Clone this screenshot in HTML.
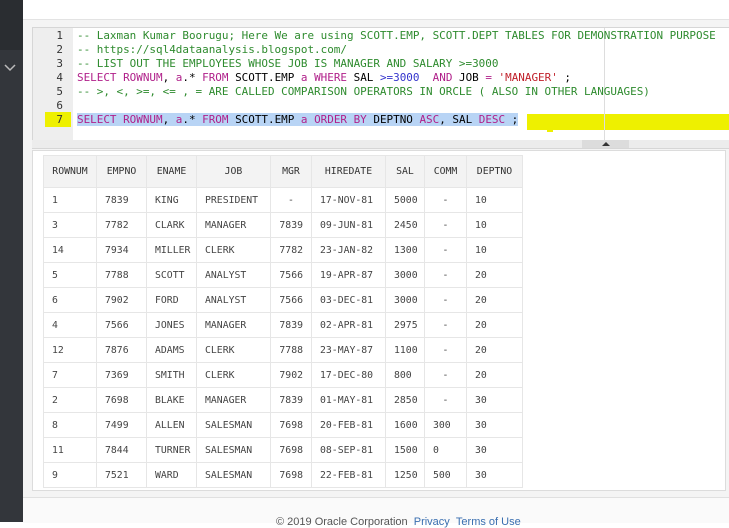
<!DOCTYPE html>
<html><head><meta charset="utf-8"><style>
body{margin:0;width:729px;height:522px;overflow:hidden;background:#fff;font-family:"Liberation Sans",sans-serif;position:relative}
.sb{position:absolute;left:0;top:0;width:23px;height:522px;background:#33363b}
.sb .t{position:absolute;left:0;top:0;width:23px;height:50px;background:#2a2d31}
.band{position:absolute;left:23px;top:19px;width:706px;height:478px;background:#f4f4f4;border-top:1px solid #e3e3e3}
.ed{position:absolute;left:32px;top:27px;width:697px;height:112px;background:#fff;border:1px solid #d6d6d6;border-right:none;overflow:hidden}
.gut{position:absolute;left:0;top:0;width:40px;height:112px;background:#eeeeee}
.code{position:absolute;left:0;top:0;font-family:"DejaVu Sans Mono",monospace;font-size:10.95px;line-height:14px;white-space:pre}
.ln{position:absolute;left:0;width:30px;text-align:right;color:#333}
.cl{position:absolute;left:44px}
.c{color:#2e8b2e}.k{color:#b0208a}.n{color:#3333cc}.s{color:#c0202a}
.sel{background:#b8d4f5}
.hs{position:absolute;left:32px;top:140px;width:697px;height:8px;background:#ececec;border-bottom:1px solid #d6d6d6}
.pan{position:absolute;left:32px;top:150px;width:692px;height:339px;background:#fff;border:1px solid #dcdcdc}
table{position:absolute;left:43px;top:155px;border-collapse:collapse;table-layout:fixed;width:479px;font-family:"DejaVu Sans Mono",monospace;font-size:9.8px;color:#444}
td,th{box-sizing:border-box;border:1px solid #e6e6e6;height:25px;padding:0 0 0 8px;text-align:left;font-weight:normal;white-space:nowrap;overflow:hidden}
th{height:32px;background:#f3f3f3;color:#333;text-align:center;padding:0}
td.r{text-align:right;padding:0 8px 0 0}
td.m{text-align:center;padding:0}
.foot{position:absolute;left:23px;top:497px;width:706px;height:25px;background:#fafafa;border-top:1px solid #e0e0e0;font-size:11px;color:#555}
</style></head><body>
<div class="sb"><div class="t"></div><svg style="position:absolute;left:4px;top:64px" width="12" height="8"><path d="M1 1 L6 6 L11 1" stroke="#bbb" stroke-width="1.5" fill="none"/></svg></div>
<div class="band"></div>
<div class="ed">
<div class="gut"></div>
<div style="position:absolute;left:12px;top:84px;width:26px;height:15px;background:#eef000"></div>
<div style="position:absolute;left:494px;top:86px;width:203px;height:16px;background:#eef000"></div>
<div style="position:absolute;left:514px;top:100px;width:6px;height:4px;background:#eef000"></div>
<div style="position:absolute;left:571px;top:0;width:1px;height:112px;background:#ddd"></div>
<div class="code" style="top:1px">
<div class="ln" style="top:0">1</div><div class="cl c" style="top:0">-- Laxman Kumar Boorugu; Here We are using SCOTT.EMP, SCOTT.DEPT TABLES FOR DEMONSTRATION PURPOSE</div>
<div class="ln" style="top:14px">2</div><div class="cl c" style="top:14px">-- https://sql4dataanalysis.blogspot.com/</div>
<div class="ln" style="top:28px">3</div><div class="cl c" style="top:28px">-- LIST OUT THE EMPLOYEES WHOSE JOB IS MANAGER AND SALARY &gt;=3000</div>
<div class="ln" style="top:42px">4</div><div class="cl" style="top:42px"><span class="k">SELECT ROWNUM</span>, <span class="k">a</span>.* <span class="k">FROM</span> SCOTT.EMP <span class="k">a WHERE</span> SAL <span class="n">&gt;=3000</span>  <span class="k">AND</span> JOB <span class="k">=</span> <span class="s">'MANAGER'</span> ;</div>
<div class="ln" style="top:56px">5</div><div class="cl c" style="top:56px">-- &gt;, &lt;, &gt;=, &lt;= , = ARE CALLED COMPARISON OPERATORS IN ORCLE ( ALSO IN OTHER LANGUAGES)</div>
<div class="ln" style="top:70px">6</div>
<div class="ln" style="top:84px">7</div><div class="cl" style="top:84px"><span class="sel"><span class="k">SELECT ROWNUM</span>, <span class="k">a</span>.* <span class="k">FROM</span> SCOTT.EMP <span class="k">a ORDER BY</span> DEPTNO <span class="k">ASC</span>, SAL <span class="k">DESC</span> ;</span></div>
</div></div>
<div class="hs"><div style="position:absolute;left:550px;top:0;width:47px;height:8px;background:#dcdcdc"></div><div style="position:absolute;left:570px;top:2px;width:0;height:0;border-left:4px solid transparent;border-right:4px solid transparent;border-bottom:4px solid #333"></div></div>
<div class="pan"></div>
<table>
<colgroup><col style="width:53px"><col style="width:50px"><col style="width:50px"><col style="width:74px"><col style="width:41px"><col style="width:74px"><col style="width:39px"><col style="width:42px"><col style="width:56px"></colgroup>
<tr><th>ROWNUM</th><th>EMPNO</th><th>ENAME</th><th>JOB</th><th>MGR</th><th>HIREDATE</th><th>SAL</th><th>COMM</th><th>DEPTNO</th></tr>
<tr><td>1</td><td>7839</td><td>KING</td><td>PRESIDENT</td><td class="m">-</td><td>17-NOV-81</td><td>5000</td><td class="m">-</td><td>10</td></tr>
<tr><td>3</td><td>7782</td><td>CLARK</td><td>MANAGER</td><td class="r">7839</td><td>09-JUN-81</td><td>2450</td><td class="m">-</td><td>10</td></tr>
<tr><td>14</td><td>7934</td><td>MILLER</td><td>CLERK</td><td class="r">7782</td><td>23-JAN-82</td><td>1300</td><td class="m">-</td><td>10</td></tr>
<tr><td>5</td><td>7788</td><td>SCOTT</td><td>ANALYST</td><td class="r">7566</td><td>19-APR-87</td><td>3000</td><td class="m">-</td><td>20</td></tr>
<tr><td>6</td><td>7902</td><td>FORD</td><td>ANALYST</td><td class="r">7566</td><td>03-DEC-81</td><td>3000</td><td class="m">-</td><td>20</td></tr>
<tr><td>4</td><td>7566</td><td>JONES</td><td>MANAGER</td><td class="r">7839</td><td>02-APR-81</td><td>2975</td><td class="m">-</td><td>20</td></tr>
<tr><td>12</td><td>7876</td><td>ADAMS</td><td>CLERK</td><td class="r">7788</td><td>23-MAY-87</td><td>1100</td><td class="m">-</td><td>20</td></tr>
<tr><td>7</td><td>7369</td><td>SMITH</td><td>CLERK</td><td class="r">7902</td><td>17-DEC-80</td><td>800</td><td class="m">-</td><td>20</td></tr>
<tr><td>2</td><td>7698</td><td>BLAKE</td><td>MANAGER</td><td class="r">7839</td><td>01-MAY-81</td><td>2850</td><td class="m">-</td><td>30</td></tr>
<tr><td>8</td><td>7499</td><td>ALLEN</td><td>SALESMAN</td><td class="r">7698</td><td>20-FEB-81</td><td>1600</td><td>300</td><td>30</td></tr>
<tr><td>11</td><td>7844</td><td>TURNER</td><td>SALESMAN</td><td class="r">7698</td><td>08-SEP-81</td><td>1500</td><td>0</td><td>30</td></tr>
<tr><td>9</td><td>7521</td><td>WARD</td><td>SALESMAN</td><td class="r">7698</td><td>22-FEB-81</td><td>1250</td><td>500</td><td>30</td></tr>
</table>
<div class="foot"><div style="position:absolute;left:253px;top:18px;white-space:nowrap">© 2019 Oracle Corporation &nbsp;<span style="color:#3a6fb0">Privacy</span> &nbsp;<span style="color:#3a6fb0">Terms of Use</span></div></div>
</body></html>
